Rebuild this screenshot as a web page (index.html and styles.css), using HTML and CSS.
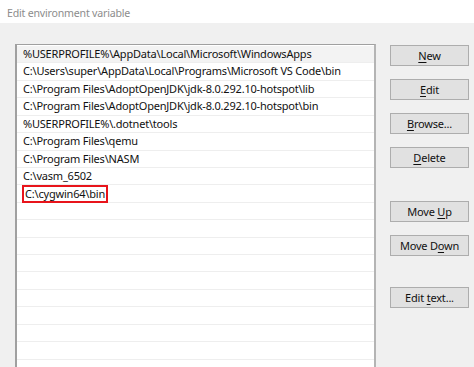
FILE: index.html
```html
<!DOCTYPE html>
<html>
<head>
<meta charset="utf-8">
<link rel="stylesheet" href="styles.css">
</head>
<body>
<div class="titlebar">Edit environment variable</div>
<div class="main">
  <div class="list">
    <div class="row selected">%USERPROFILE%\AppData\Local\Microsoft\WindowsApps</div>
    <div class="row">C:\Users\super\AppData\Local\Programs\Microsoft VS Code\bin</div>
    <div class="row">C:\Program Files\AdoptOpenJDK\jdk-8.0.292.10-hotspot\lib</div>
    <div class="row">C:\Program Files\AdoptOpenJDK\jdk-8.0.292.10-hotspot\bin</div>
    <div class="row">%USERPROFILE%\.dotnet\tools</div>
    <div class="row">C:\Program Files\qemu</div>
    <div class="row">C:\Program Files\NASM</div>
    <div class="row">C:\vasm_6502</div>
    <div class="row"><span class="mark">C:\cygwin64\bin</span></div>
    <div class="row"></div>
    <div class="row"></div>
    <div class="row"></div>
    <div class="row"></div>
    <div class="row"></div>
    <div class="row"></div>
    <div class="row"></div>
    <div class="row"></div>
    <div class="row"></div>
    <div class="row"></div>
  </div>
  <div class="buttons">
    <button class="btn"><u>N</u>ew</button>
    <button class="btn"><u>E</u>dit</button>
    <button class="btn"><u>B</u>rowse...</button>
    <button class="btn"><u>D</u>elete</button>
    <button class="btn gap-lg">Move <u>U</u>p</button>
    <button class="btn">Move D<u>o</u>wn</button>
    <button class="btn gap-md">Edit <u>t</u>ext...</button>
  </div>
</div>
</body>
</html>
```

FILE: styles.css
```css
* { box-sizing: border-box; }
html, body {
  margin: 0;
  padding: 0;
  width: 474px;
  height: 367px;
  overflow: hidden;
  background: #f0f0f0;
  font-family: "Noto Sans", "Open Sans", sans-serif;
  font-size: 11px;
  letter-spacing: -0.2px;
  color: #000;
}
.titlebar {
  height: 23px;
  background: #ffffff;
  color: #8c8c8c;
  padding-left: 7px;
  line-height: 26px;
  font-size: 10.6px;
}
.main {
  display: flex;
  padding: 21px 5px 0 15px;
  gap: 14px;
}
.list {
  width: 361px;
  height: 340px;
  background: #fff;
  border: 1px solid #a0a0a0;
  border-left: 2px solid #a0a0a0;
  border-right: 2px solid #b4b4b4;
  padding-top: 1px;
  overflow: hidden;
  flex: none;
}
.row {
  height: 17.43px;
  line-height: 16px;
  border-bottom: 1px solid #eeeeee;
  padding-left: 6px;
  white-space: nowrap;
  color: #111;
}
.row.selected {
  background: #f3f3f3;
}
.mark {
  display: inline-block;
  position: relative;
  border: 2px solid #e8141b;
  line-height: 14px;
  padding: 0 1px;
  margin-left: -1px;
  top: 0;
  background: #fff;
}
.buttons {
  display: flex;
  flex-direction: column;
  gap: 13px;
  padding-top: 1px;
}
.btn {
  width: 79px;
  height: 21px;
  background: #e1e1e1;
  border: 1px solid #adadad;
  font-family: inherit;
  font-size: 11px;
  letter-spacing: -0.2px;
  color: #111;
  padding: 0;
  line-height: 18px;
}
.btn u { text-decoration-thickness: 1px; text-underline-offset: 2px; }
.gap-lg { margin-top: 20px; }
.gap-md { margin-top: 18px; }
```
